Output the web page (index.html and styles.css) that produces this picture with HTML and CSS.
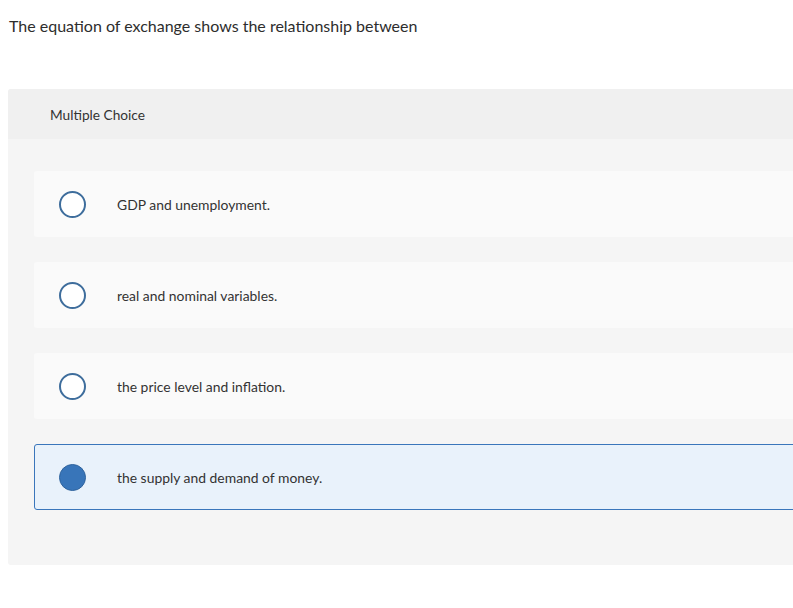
FILE: index.html
```html
<!DOCTYPE html>
<html>
<head>
<meta charset="utf-8">
<link rel="stylesheet" href="styles.css">
</head>
<body>
<p class="question">The equation of exchange shows the relationship between</p>
<div class="panel">
  <div class="panel-head">Multiple Choice</div>
  <div class="panel-body">
    <div class="option"><span class="radio"></span><span class="label">GDP and unemployment.</span></div>
    <div class="option"><span class="radio"></span><span class="label">real and nominal variables.</span></div>
    <div class="option"><span class="radio"></span><span class="label">the price level and inflation.</span></div>
    <div class="option selected"><span class="radio"></span><span class="label">the supply and demand of money.</span></div>
  </div>
</div>
</body>
</html>
```
FILE: styles.css
```css
html, body {
  margin: 0;
  padding: 0;
  background: #fff;
  overflow: hidden;
}
body {
  width: 793px;
  height: 608px;
  font-family: Lato, "Open Sans", sans-serif;
  color: #333;
}
.question {
  margin: 0;
  padding: 16px 0 0 9px;
  font-size: 16px;
  line-height: 20px;
  color: #2d2d2d;
}
.panel {
  margin: 53px 0 0 8px;
  width: 800px;
  background: #f5f5f5;
  border-radius: 3px;
  overflow: hidden;
}
.panel-head {
  height: 50px;
  background: #f0f0f0;
  display: flex;
  align-items: center;
  padding-left: 42px;
  font-size: 13.7px;
  color: #333;
}
.panel-body {
  padding: 32px 0 55px 26px;
  display: flex;
  flex-direction: column;
  gap: 25px;
}
.option {
  height: 66px;
  box-sizing: border-box;
  background: #fafafa;
  border-radius: 3px;
  display: flex;
  align-items: center;
  padding-left: 25px;
}
.radio {
  width: 27px;
  height: 27px;
  box-sizing: border-box;
  border: 2px solid #3e6d9c;
  border-radius: 50%;
  background: #fff;
  flex: none;
}
.label {
  margin-left: 31px;
  font-size: 13.9px;
  color: #333;
}
.option.selected {
  background: #e9f2fb;
  border: 1px solid #3a76bb;
  padding-left: 24px;
}
.option.selected .radio {
  background: #3875b9;
  border-color: #2f639d;
  border-width: 1px;
}
```
